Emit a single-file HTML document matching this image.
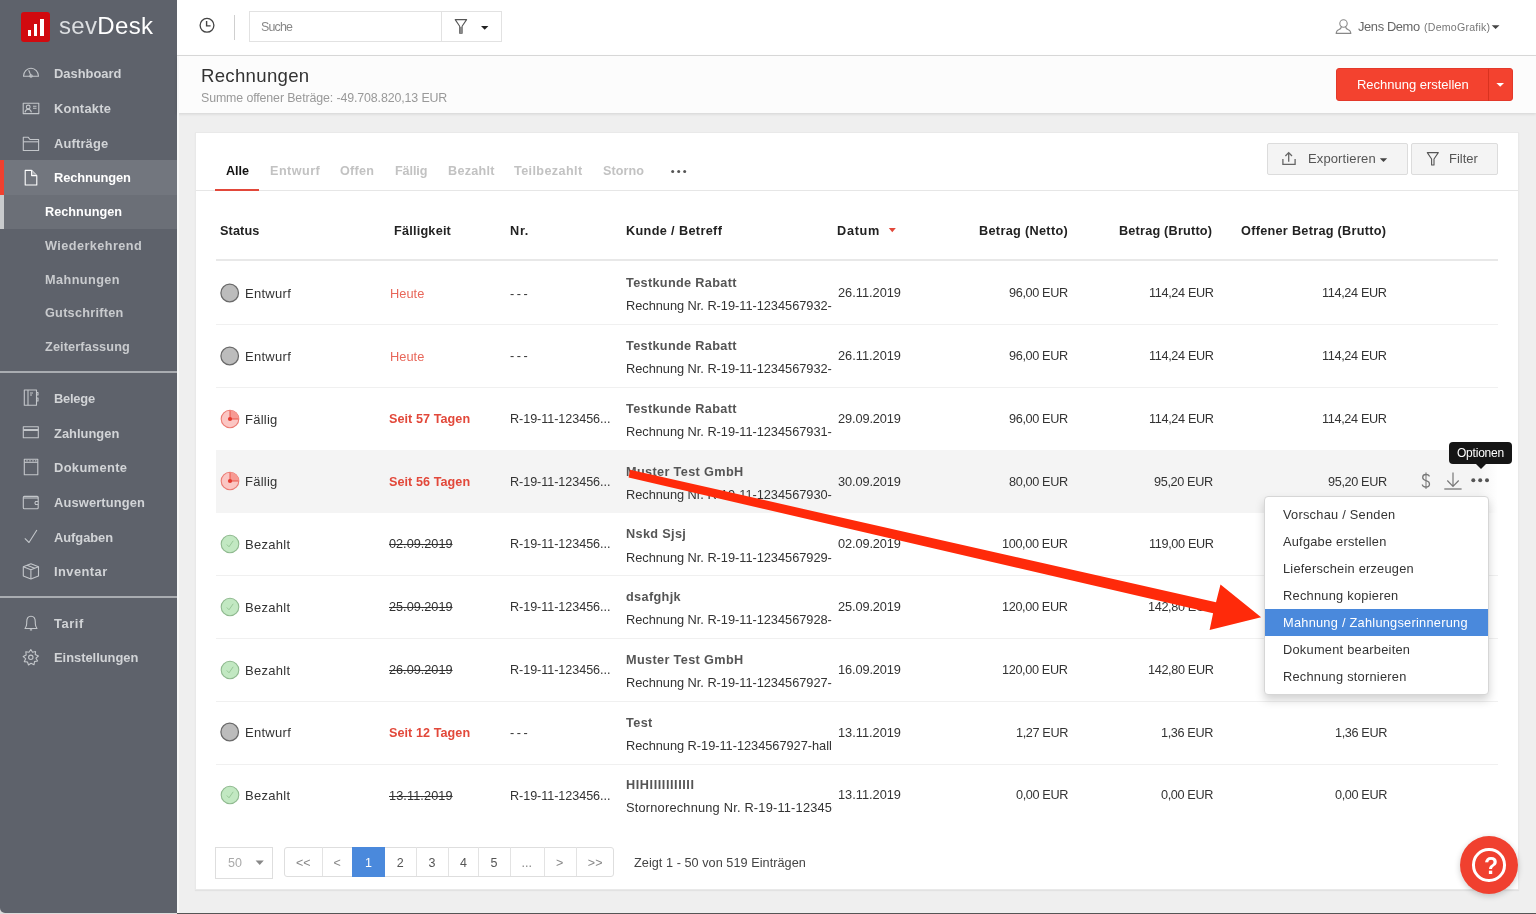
<!DOCTYPE html><html><head><meta charset="utf-8"><title>sevDesk</title><style>
html,body{margin:0;padding:0}
body{width:1536px;height:914px;overflow:hidden;position:relative;background:#efefef;font-family:"Liberation Sans",sans-serif}
.t{position:absolute;line-height:1;white-space:nowrap;will-change:transform}
</style></head><body>
<div style="position:absolute;left:0px;top:900px;width:177px;height:14px;background:#dcdcdc"></div>
<div style="position:absolute;left:0px;top:0px;width:177px;height:912.5px;background:#5e626b;border-bottom-left-radius:5px"></div>
<div style="position:absolute;left:21px;top:12px;width:29px;height:30px;background:#d10a0f;border-radius:3px"></div>
<div style="position:absolute;left:27.5px;top:30px;width:3.2px;height:5.7px;background:#fff"></div>
<div style="position:absolute;left:34px;top:24px;width:3.3px;height:11.7px;background:#fff"></div>
<div style="position:absolute;left:40.4px;top:18.7px;width:3.6px;height:17px;background:#fff"></div>
<div class="t" style="left:59px;top:14px;font-size:24px;line-height:1;color:#f2f2f2;letter-spacing:0.33px"><span style="color:#dcdee1">sev</span><span style="color:#fff">Desk</span></div>
<div style="position:absolute;left:0px;top:160px;width:177px;height:35px;background:#72767e"></div>
<div style="position:absolute;left:0px;top:160px;width:4px;height:35px;background:#f0402f"></div>
<div style="position:absolute;left:0px;top:195px;width:177px;height:34px;background:#6b6f77"></div>
<div style="position:absolute;left:0px;top:195px;width:4px;height:34px;background:#c9cbcd"></div>
<div class="t" style="left:53.50px;top:68px;font-size:12.9px;color:#d2d4d7;font-weight:bold;letter-spacing:0.003px;">Dashboard</div>
<div class="t" style="left:53.50px;top:103px;font-size:12.9px;color:#d2d4d7;font-weight:bold;letter-spacing:0.259px;">Kontakte</div>
<div class="t" style="left:53.50px;top:138px;font-size:12.9px;color:#d2d4d7;font-weight:bold;letter-spacing:0.167px;">Aufträge</div>
<div class="t" style="left:53.50px;top:172px;font-size:12.9px;color:#fff;font-weight:bold;letter-spacing:-0.136px;">Rechnungen</div>
<div class="t" style="left:44.80px;top:206px;font-size:12.7px;color:#fff;font-weight:bold;letter-spacing:0.021px;">Rechnungen</div>
<div class="t" style="left:44.80px;top:240px;font-size:12.7px;color:#c9cbce;font-weight:bold;letter-spacing:0.431px;">Wiederkehrend</div>
<div class="t" style="left:44.80px;top:274px;font-size:12.7px;color:#c9cbce;font-weight:bold;letter-spacing:0.419px;">Mahnungen</div>
<div class="t" style="left:44.80px;top:307px;font-size:12.7px;color:#c9cbce;font-weight:bold;letter-spacing:0.254px;">Gutschriften</div>
<div class="t" style="left:44.80px;top:341px;font-size:12.7px;color:#c9cbce;font-weight:bold;letter-spacing:0.136px;">Zeiterfassung</div>
<div style="position:absolute;left:0px;top:371px;width:177px;height:2px;background:#a9acb1"></div>
<div class="t" style="left:53.50px;top:393px;font-size:12.9px;color:#d2d4d7;font-weight:bold;letter-spacing:-0.240px;">Belege</div>
<div class="t" style="left:53.50px;top:428px;font-size:12.9px;color:#d2d4d7;font-weight:bold;letter-spacing:0.011px;">Zahlungen</div>
<div class="t" style="left:53.50px;top:462px;font-size:12.9px;color:#d2d4d7;font-weight:bold;letter-spacing:0.345px;">Dokumente</div>
<div class="t" style="left:53.50px;top:497px;font-size:12.9px;color:#d2d4d7;font-weight:bold;letter-spacing:0.128px;">Auswertungen</div>
<div class="t" style="left:53.50px;top:532px;font-size:12.9px;color:#d2d4d7;font-weight:bold;letter-spacing:-0.055px;">Aufgaben</div>
<div class="t" style="left:53.50px;top:566px;font-size:12.9px;color:#d2d4d7;font-weight:bold;letter-spacing:0.431px;">Inventar</div>
<div style="position:absolute;left:0px;top:596px;width:177px;height:2px;background:#a9acb1"></div>
<div class="t" style="left:53.50px;top:618px;font-size:12.9px;color:#d2d4d7;font-weight:bold;letter-spacing:0.569px;">Tarif</div>
<div class="t" style="left:53.50px;top:652px;font-size:12.9px;color:#d2d4d7;font-weight:bold;letter-spacing:-0.014px;">Einstellungen</div>
<svg style="position:absolute;left:0;top:0" width="177" height="914" fill="none" stroke="#c3c6ca" stroke-width="1.1" stroke-linejoin="round"><path d="M23.5 76.3 A7.5 8 0 0 1 38.5 76.3 Z"/><path d="M28.7 70.3 L30.9 75.6"/><circle cx="31" cy="76" r="1.2"/><rect x="23.2" y="103.2" width="15.6" height="10.4"/><circle cx="28.2" cy="107" r="1.9"/><path d="M25 112.4 Q25.5 109.5 28.2 109.3 Q30.9 109.5 31.4 112.4"/><path d="M33 106.3 H36.5 M33 108.3 H36.5"/><path d="M23.3 150.5 V137.3 H28.3 L30 139.5 H38.6 V150.5 Z"/><path d="M23.3 141.8 H38.6"/><path d="M25.2 170.4 H31.6 L36.8 175.6 V185 H25.2 Z" stroke="#fff"/><path d="M31.6 170.4 V175.6 H36.8" stroke="#fff" fill="#a0a3a8"/><rect x="24.3" y="390" width="12.2" height="15.3"/><path d="M28 390 V405.3"/><path d="M36.5 392.5 H38 V395 H36.5 M36.5 398 H38 V401 H36.5"/><path d="M30 393 H33 M30 395 H32"/><rect x="23.3" y="426.7" width="15" height="11.1"/><path d="M23.3 430 H38.3" stroke-width="2"/><rect x="24.3" y="459.2" width="13.5" height="15.5"/><path d="M24.3 462.3 H37.8"/><path d="M26.5 460.8 h1 M29.5 460.8 h1 M32.5 460.8 h1 M35.3 460.8 h1" stroke-width="1.4"/><rect x="23.3" y="496.4" width="14.9" height="12.3" rx="1"/><path d="M23.3 498 H38.2"/><path d="M38.2 501.5 H35.5 Q34.3 503 35.5 504.5 H38.2"/><path d="M24.8 538.3 L29 542.5 L36.9 530"/><path d="M30.9 563.8 L38.5 566.8 V576 L30.9 579 L23.3 576 V566.8 Z"/><path d="M23.3 566.8 L30.9 569.8 L38.5 566.8 M30.9 569.8 V579"/><path d="M27 565.3 L34.7 568.3"/><path d="M25 628.5 H37 Q35.3 626.5 35.3 623.5 V622 Q35.3 616.3 31 616.3 Q26.7 616.3 26.7 622 V623.5 Q26.7 626.5 25 628.5 Z"/><path d="M30 629.5 Q31 630.5 32 629.5"/><path d="M30.8 649.5 L32.5 652.2 L35.6 651.5 L35.2 654.6 L38.4 656 L36 658.2 L37.6 661 L34.5 661.6 L34 664.8 L31 663.3 L28.5 665 L27.5 662 L24.3 661.6 L25.7 658.7 L23.2 656.6 L26.2 655 L25.8 651.8 L29 652.3 Z"/><circle cx="30.8" cy="657.3" r="2.2"/></svg>
<div style="position:absolute;left:177px;top:0px;width:1359px;height:55px;background:#fff;border-bottom:1px solid #dcdcdc"></div>
<div style="position:absolute;left:177px;top:56px;width:1359px;height:57px;background:#fcfcfc;box-shadow:0 1px 3px rgba(0,0,0,.12)"></div>
<div class="t" style="left:200.60px;top:67px;font-size:18.6px;color:#333;font-weight:normal;letter-spacing:0.302px;">Rechnungen</div>
<div class="t" style="left:200.50px;top:92px;font-size:12.4px;color:#999;font-weight:normal;letter-spacing:-0.122px;">Summe offener Beträge: -49.708.820,13 EUR</div>
<div style="position:absolute;left:249px;top:11px;width:253px;height:31px;background:#fff;border:1px solid #e2e2e2;box-sizing:border-box"></div>
<div style="position:absolute;left:441px;top:11px;width:1px;height:31px;background:#e2e2e2"></div>
<div class="t" style="left:261.00px;top:21px;font-size:12.4px;color:#888;font-weight:normal;letter-spacing:-0.789px;">Suche</div>
<div style="position:absolute;left:234px;top:14.6px;width:1px;height:25px;background:#cfcfcf"></div>
<div style="position:absolute;left:1336px;top:68px;width:177px;height:33px;background:#f3422f;border:1px solid #e3392a;box-sizing:border-box;border-radius:3px"></div>
<div style="position:absolute;left:1488px;top:68.5px;width:1px;height:32.5px;background:#d8321f"></div>
<div class="t" style="left:1356.60px;top:78px;font-size:13px;color:#fff;font-weight:normal;letter-spacing:-0.019px;">Rechnung erstellen</div>
<div class="t" style="left:1357.50px;top:21px;font-size:12.9px;color:#666;font-weight:normal;letter-spacing:-0.381px;">Jens Demo</div>
<div class="t" style="left:1423.80px;top:22px;font-size:10.6px;color:#777;font-weight:normal;letter-spacing:0.235px;">(DemoGrafik)</div>
<div style="position:absolute;left:177px;top:56px;width:1.5px;height:857px;background:#f6f7f7"></div>
<div style="position:absolute;left:195px;top:132px;width:1324px;height:758px;background:#fff;border:1px solid #e9e9e9;box-sizing:border-box;box-shadow:0 1px 1px rgba(0,0,0,.05)"></div>
<div class="t" style="left:225.60px;top:165px;font-size:12.6px;color:#111;font-weight:bold;letter-spacing:-0.069px;">Alle</div>
<div class="t" style="left:269.50px;top:165px;font-size:12.6px;color:#c2c2c2;font-weight:bold;letter-spacing:0.480px;">Entwurf</div>
<div class="t" style="left:339.70px;top:165px;font-size:12.6px;color:#c2c2c2;font-weight:bold;letter-spacing:0.275px;">Offen</div>
<div class="t" style="left:395.00px;top:165px;font-size:12.6px;color:#c2c2c2;font-weight:bold;letter-spacing:-0.080px;">Fällig</div>
<div class="t" style="left:447.70px;top:165px;font-size:12.6px;color:#c2c2c2;font-weight:bold;letter-spacing:0.282px;">Bezahlt</div>
<div class="t" style="left:514.40px;top:165px;font-size:12.6px;color:#c2c2c2;font-weight:bold;letter-spacing:0.393px;">Teilbezahlt</div>
<div class="t" style="left:603.00px;top:165px;font-size:12.6px;color:#c2c2c2;font-weight:bold;letter-spacing:0.081px;">Storno</div>
<div style="position:absolute;left:196px;top:190px;width:1322px;height:1px;background:#e6e6e6"></div>
<div style="position:absolute;left:215px;top:188.8px;width:44px;height:2.4px;background:#e2483a"></div>
<div style="position:absolute;left:1267px;top:143px;width:140.5px;height:32.3px;background:#f4f4f4;border:1px solid #dcdcdc;box-sizing:border-box;border-radius:2px"></div>
<div style="position:absolute;left:1411px;top:143px;width:87px;height:32.3px;background:#f4f4f4;border:1px solid #dcdcdc;box-sizing:border-box;border-radius:2px"></div>
<div class="t" style="left:1308.30px;top:152px;font-size:13px;color:#555;font-weight:normal;letter-spacing:0.122px;">Exportieren</div>
<div class="t" style="left:1449.00px;top:152px;font-size:13px;color:#555;font-weight:normal;letter-spacing:-0.017px;">Filter</div>
<div class="t" style="left:220.40px;top:225px;font-size:12.7px;color:#222;font-weight:bold;letter-spacing:0.118px;">Status</div>
<div class="t" style="left:394.30px;top:225px;font-size:12.7px;color:#222;font-weight:bold;letter-spacing:0.206px;">Fälligkeit</div>
<div class="t" style="left:510.30px;top:225px;font-size:12.7px;color:#222;font-weight:bold;letter-spacing:0.729px;">Nr.</div>
<div class="t" style="left:625.70px;top:225px;font-size:12.7px;color:#222;font-weight:bold;letter-spacing:0.354px;">Kunde / Betreff</div>
<div class="t" style="left:837.30px;top:225px;font-size:12.7px;color:#222;font-weight:bold;letter-spacing:0.723px;">Datum</div>
<div class="t" style="right:468.29px;top:225px;font-size:12.7px;color:#222;font-weight:bold;letter-spacing:0.318px;">Betrag (Netto)</div>
<div class="t" style="right:323.69px;top:225px;font-size:12.7px;color:#222;font-weight:bold;letter-spacing:0.200px;">Betrag (Brutto)</div>
<div class="t" style="right:149.71px;top:225px;font-size:12.7px;color:#222;font-weight:bold;letter-spacing:0.282px;">Offener Betrag (Brutto)</div>
<div style="position:absolute;left:216px;top:259px;width:1282px;height:2px;background:#e8e8e8"></div>
<svg style="position:absolute;left:219.5px;top:283.0px" width="20" height="20" viewBox="0 0 20 20"><circle cx="9.7" cy="10" r="8.8" fill="#bcbcbc" stroke="#6a6a6a" stroke-width="1.25"/></svg>
<div class="t" style="left:244.70px;top:287px;font-size:13px;color:#333;font-weight:normal;letter-spacing:0.283px;">Entwurf</div>
<div class="t" style="left:389.70px;top:288px;font-size:12.8px;color:#e8675a;font-weight:normal;letter-spacing:0.037px;">Heute</div>
<div class="t" style="left:510.10px;top:288px;font-size:12.6px;color:#333;font-weight:normal;letter-spacing:-0.473px;">- - -</div>
<div class="t" style="left:625.80px;top:277px;font-size:12.7px;color:#555;font-weight:bold;letter-spacing:0.333px;">Testkunde Rabatt</div>
<div style="position:absolute;left:625.8px;top:298px;width:207px;height:18px;overflow:hidden"><div class="t" style="left:0.00px;top:2px;font-size:12.8px;color:#333;font-weight:normal;letter-spacing:-0.031px;">Rechnung Nr. R-19-11-1234567932-</div></div>
<div class="t" style="left:837.70px;top:287px;font-size:12.8px;color:#333;font-weight:normal;letter-spacing:-0.013px;">26.11.2019</div>
<div class="t" style="right:468.17px;top:287px;font-size:12.7px;color:#333;font-weight:normal;letter-spacing:-0.367px;">96,00 EUR</div>
<div class="t" style="right:322.86px;top:287px;font-size:12.7px;color:#333;font-weight:normal;letter-spacing:-0.358px;">114,24 EUR</div>
<div class="t" style="right:149.16px;top:287px;font-size:12.7px;color:#333;font-weight:normal;letter-spacing:-0.358px;">114,24 EUR</div>
<div style="position:absolute;left:216px;top:324px;width:1282px;height:1px;background:#f0f0f0"></div>
<svg style="position:absolute;left:219.5px;top:345.75px" width="20" height="20" viewBox="0 0 20 20"><circle cx="9.7" cy="10" r="8.8" fill="#bcbcbc" stroke="#6a6a6a" stroke-width="1.25"/></svg>
<div class="t" style="left:244.70px;top:350px;font-size:13px;color:#333;font-weight:normal;letter-spacing:0.283px;">Entwurf</div>
<div class="t" style="left:389.70px;top:351px;font-size:12.8px;color:#e8675a;font-weight:normal;letter-spacing:0.037px;">Heute</div>
<div class="t" style="left:510.10px;top:350px;font-size:12.6px;color:#333;font-weight:normal;letter-spacing:-0.473px;">- - -</div>
<div class="t" style="left:625.80px;top:340px;font-size:12.7px;color:#555;font-weight:bold;letter-spacing:0.333px;">Testkunde Rabatt</div>
<div style="position:absolute;left:625.8px;top:361px;width:207px;height:18px;overflow:hidden"><div class="t" style="left:0.00px;top:2px;font-size:12.8px;color:#333;font-weight:normal;letter-spacing:-0.031px;">Rechnung Nr. R-19-11-1234567932-</div></div>
<div class="t" style="left:837.70px;top:350px;font-size:12.8px;color:#333;font-weight:normal;letter-spacing:-0.013px;">26.11.2019</div>
<div class="t" style="right:468.17px;top:350px;font-size:12.7px;color:#333;font-weight:normal;letter-spacing:-0.367px;">96,00 EUR</div>
<div class="t" style="right:322.86px;top:350px;font-size:12.7px;color:#333;font-weight:normal;letter-spacing:-0.358px;">114,24 EUR</div>
<div class="t" style="right:149.16px;top:350px;font-size:12.7px;color:#333;font-weight:normal;letter-spacing:-0.358px;">114,24 EUR</div>
<div style="position:absolute;left:216px;top:387px;width:1282px;height:1px;background:#f0f0f0"></div>
<svg style="position:absolute;left:219.5px;top:408.5px" width="20" height="20" viewBox="0 0 20 20"><circle cx="10" cy="10" r="8.8" fill="#fbc6c3" stroke="#ec7b73" stroke-width="1.1"/><path d="M10 10 V1.2 A8.8 8.8 0 0 1 18.8 10 Z" fill="#f79a93"/><path d="M10 1.5 V10 H18.5" fill="none" stroke="#e9564b" stroke-width="1"/><circle cx="10" cy="10" r="2.1" fill="#e53a2f"/></svg>
<div class="t" style="left:244.70px;top:413px;font-size:13px;color:#333;font-weight:normal;letter-spacing:0.239px;">Fällig</div>
<div class="t" style="left:389.40px;top:413px;font-size:12.6px;color:#e2483a;font-weight:bold;letter-spacing:0.069px;">Seit 57 Tagen</div>
<div class="t" style="left:510.10px;top:413px;font-size:12.6px;color:#333;font-weight:normal;letter-spacing:-0.052px;">R-19-11-123456...</div>
<div class="t" style="left:625.80px;top:403px;font-size:12.7px;color:#555;font-weight:bold;letter-spacing:0.333px;">Testkunde Rabatt</div>
<div style="position:absolute;left:625.8px;top:424px;width:207px;height:18px;overflow:hidden"><div class="t" style="left:0.00px;top:2px;font-size:12.8px;color:#333;font-weight:normal;letter-spacing:-0.031px;">Rechnung Nr. R-19-11-1234567931-</div></div>
<div class="t" style="left:837.70px;top:413px;font-size:12.8px;color:#333;font-weight:normal;letter-spacing:-0.118px;">29.09.2019</div>
<div class="t" style="right:468.17px;top:413px;font-size:12.7px;color:#333;font-weight:normal;letter-spacing:-0.367px;">96,00 EUR</div>
<div class="t" style="right:322.86px;top:413px;font-size:12.7px;color:#333;font-weight:normal;letter-spacing:-0.358px;">114,24 EUR</div>
<div class="t" style="right:149.16px;top:413px;font-size:12.7px;color:#333;font-weight:normal;letter-spacing:-0.358px;">114,24 EUR</div>
<div style="position:absolute;left:216px;top:449.75px;width:1282px;height:62.75px;background:linear-gradient(to right,#f4f4f4 0,#f4f4f4 1262px,rgba(244,244,244,0) 1282px)"></div>
<svg style="position:absolute;left:219.5px;top:471.25px" width="20" height="20" viewBox="0 0 20 20"><circle cx="10" cy="10" r="8.8" fill="#fbc6c3" stroke="#ec7b73" stroke-width="1.1"/><path d="M10 10 V1.2 A8.8 8.8 0 0 1 18.8 10 Z" fill="#f79a93"/><path d="M10 1.5 V10 H18.5" fill="none" stroke="#e9564b" stroke-width="1"/><circle cx="10" cy="10" r="2.1" fill="#e53a2f"/></svg>
<div class="t" style="left:244.70px;top:475px;font-size:13px;color:#333;font-weight:normal;letter-spacing:0.239px;">Fällig</div>
<div class="t" style="left:389.40px;top:476px;font-size:12.6px;color:#e2483a;font-weight:bold;letter-spacing:0.069px;">Seit 56 Tagen</div>
<div class="t" style="left:510.10px;top:476px;font-size:12.6px;color:#333;font-weight:normal;letter-spacing:-0.052px;">R-19-11-123456...</div>
<div class="t" style="left:625.80px;top:466px;font-size:12.7px;color:#555;font-weight:bold;letter-spacing:0.353px;">Muster Test GmbH</div>
<div style="position:absolute;left:625.8px;top:487px;width:207px;height:18px;overflow:hidden"><div class="t" style="left:0.00px;top:2px;font-size:12.8px;color:#333;font-weight:normal;letter-spacing:-0.031px;">Rechnung Nr. R-19-11-1234567930-</div></div>
<div class="t" style="left:837.70px;top:476px;font-size:12.8px;color:#333;font-weight:normal;letter-spacing:-0.118px;">30.09.2019</div>
<div class="t" style="right:468.17px;top:476px;font-size:12.7px;color:#333;font-weight:normal;letter-spacing:-0.367px;">80,00 EUR</div>
<div class="t" style="right:322.87px;top:476px;font-size:12.7px;color:#333;font-weight:normal;letter-spacing:-0.367px;">95,20 EUR</div>
<div class="t" style="right:149.17px;top:476px;font-size:12.7px;color:#333;font-weight:normal;letter-spacing:-0.367px;">95,20 EUR</div>
<svg style="position:absolute;left:219.5px;top:534.0px" width="20" height="20" viewBox="0 0 20 20"><circle cx="10" cy="10" r="8.8" fill="#c2e8c2" stroke="#8fb98f" stroke-width="1.1"/><path d="M6.8 10.5 L9 12.8 L13.2 6.8" fill="none" stroke="#98c898" stroke-width="1"/></svg>
<div class="t" style="left:244.70px;top:538px;font-size:13px;color:#333;font-weight:normal;letter-spacing:0.278px;">Bezahlt</div>
<div class="t" style="left:389.40px;top:538px;font-size:12.7px;color:#333;font-weight:normal;letter-spacing:0.004px;text-decoration:line-through">02.09.2019</div>
<div class="t" style="left:510.10px;top:538px;font-size:12.6px;color:#333;font-weight:normal;letter-spacing:-0.052px;">R-19-11-123456...</div>
<div class="t" style="left:625.80px;top:528px;font-size:12.7px;color:#555;font-weight:bold;letter-spacing:0.338px;">Nskd Sjsj</div>
<div style="position:absolute;left:625.8px;top:550px;width:207px;height:18px;overflow:hidden"><div class="t" style="left:0.00px;top:2px;font-size:12.8px;color:#333;font-weight:normal;letter-spacing:-0.031px;">Rechnung Nr. R-19-11-1234567929-</div></div>
<div class="t" style="left:837.70px;top:538px;font-size:12.8px;color:#333;font-weight:normal;letter-spacing:-0.118px;">02.09.2019</div>
<div class="t" style="right:468.17px;top:538px;font-size:12.7px;color:#333;font-weight:normal;letter-spacing:-0.363px;">100,00 EUR</div>
<div class="t" style="right:322.86px;top:538px;font-size:12.7px;color:#333;font-weight:normal;letter-spacing:-0.358px;">119,00 EUR</div>
<div style="position:absolute;left:216px;top:575px;width:1282px;height:1px;background:#f0f0f0"></div>
<svg style="position:absolute;left:219.5px;top:596.75px" width="20" height="20" viewBox="0 0 20 20"><circle cx="10" cy="10" r="8.8" fill="#c2e8c2" stroke="#8fb98f" stroke-width="1.1"/><path d="M6.8 10.5 L9 12.8 L13.2 6.8" fill="none" stroke="#98c898" stroke-width="1"/></svg>
<div class="t" style="left:244.70px;top:601px;font-size:13px;color:#333;font-weight:normal;letter-spacing:0.278px;">Bezahlt</div>
<div class="t" style="left:389.40px;top:601px;font-size:12.7px;color:#333;font-weight:normal;letter-spacing:0.004px;text-decoration:line-through">25.09.2019</div>
<div class="t" style="left:510.10px;top:601px;font-size:12.6px;color:#333;font-weight:normal;letter-spacing:-0.052px;">R-19-11-123456...</div>
<div class="t" style="left:625.80px;top:591px;font-size:12.7px;color:#555;font-weight:bold;letter-spacing:0.353px;">dsafghjk</div>
<div style="position:absolute;left:625.8px;top:612px;width:207px;height:18px;overflow:hidden"><div class="t" style="left:0.00px;top:2px;font-size:12.8px;color:#333;font-weight:normal;letter-spacing:-0.031px;">Rechnung Nr. R-19-11-1234567928-</div></div>
<div class="t" style="left:837.70px;top:601px;font-size:12.8px;color:#333;font-weight:normal;letter-spacing:-0.118px;">25.09.2019</div>
<div class="t" style="right:468.17px;top:601px;font-size:12.7px;color:#333;font-weight:normal;letter-spacing:-0.363px;">120,00 EUR</div>
<div class="t" style="right:322.87px;top:601px;font-size:12.7px;color:#333;font-weight:normal;letter-spacing:-0.363px;">142,80 EUR</div>
<div style="position:absolute;left:216px;top:638px;width:1282px;height:1px;background:#f0f0f0"></div>
<svg style="position:absolute;left:219.5px;top:659.5px" width="20" height="20" viewBox="0 0 20 20"><circle cx="10" cy="10" r="8.8" fill="#c2e8c2" stroke="#8fb98f" stroke-width="1.1"/><path d="M6.8 10.5 L9 12.8 L13.2 6.8" fill="none" stroke="#98c898" stroke-width="1"/></svg>
<div class="t" style="left:244.70px;top:664px;font-size:13px;color:#333;font-weight:normal;letter-spacing:0.278px;">Bezahlt</div>
<div class="t" style="left:389.40px;top:664px;font-size:12.7px;color:#333;font-weight:normal;letter-spacing:0.004px;text-decoration:line-through">26.09.2019</div>
<div class="t" style="left:510.10px;top:664px;font-size:12.6px;color:#333;font-weight:normal;letter-spacing:-0.052px;">R-19-11-123456...</div>
<div class="t" style="left:625.80px;top:654px;font-size:12.7px;color:#555;font-weight:bold;letter-spacing:0.353px;">Muster Test GmbH</div>
<div style="position:absolute;left:625.8px;top:675px;width:207px;height:18px;overflow:hidden"><div class="t" style="left:0.00px;top:2px;font-size:12.8px;color:#333;font-weight:normal;letter-spacing:-0.031px;">Rechnung Nr. R-19-11-1234567927-</div></div>
<div class="t" style="left:837.70px;top:664px;font-size:12.8px;color:#333;font-weight:normal;letter-spacing:-0.118px;">16.09.2019</div>
<div class="t" style="right:468.17px;top:664px;font-size:12.7px;color:#333;font-weight:normal;letter-spacing:-0.363px;">120,00 EUR</div>
<div class="t" style="right:322.87px;top:664px;font-size:12.7px;color:#333;font-weight:normal;letter-spacing:-0.363px;">142,80 EUR</div>
<div style="position:absolute;left:216px;top:701px;width:1282px;height:1px;background:#f0f0f0"></div>
<svg style="position:absolute;left:219.5px;top:722.25px" width="20" height="20" viewBox="0 0 20 20"><circle cx="9.7" cy="10" r="8.8" fill="#bcbcbc" stroke="#6a6a6a" stroke-width="1.25"/></svg>
<div class="t" style="left:244.70px;top:726px;font-size:13px;color:#333;font-weight:normal;letter-spacing:0.283px;">Entwurf</div>
<div class="t" style="left:389.40px;top:727px;font-size:12.6px;color:#e2483a;font-weight:bold;letter-spacing:0.069px;">Seit 12 Tagen</div>
<div class="t" style="left:510.10px;top:727px;font-size:12.6px;color:#333;font-weight:normal;letter-spacing:-0.473px;">- - -</div>
<div class="t" style="left:625.80px;top:717px;font-size:12.7px;color:#555;font-weight:bold;letter-spacing:0.396px;">Test</div>
<div style="position:absolute;left:625.8px;top:738px;width:207px;height:18px;overflow:hidden"><div class="t" style="left:0.00px;top:2px;font-size:12.8px;color:#333;font-weight:normal;letter-spacing:-0.031px;">Rechnung R-19-11-1234567927-hall</div></div>
<div class="t" style="left:837.70px;top:727px;font-size:12.8px;color:#333;font-weight:normal;letter-spacing:-0.013px;">13.11.2019</div>
<div class="t" style="right:468.17px;top:727px;font-size:12.7px;color:#333;font-weight:normal;letter-spacing:-0.372px;">1,27 EUR</div>
<div class="t" style="right:322.87px;top:727px;font-size:12.7px;color:#333;font-weight:normal;letter-spacing:-0.372px;">1,36 EUR</div>
<div class="t" style="right:149.17px;top:727px;font-size:12.7px;color:#333;font-weight:normal;letter-spacing:-0.372px;">1,36 EUR</div>
<div style="position:absolute;left:216px;top:764px;width:1282px;height:1px;background:#f0f0f0"></div>
<svg style="position:absolute;left:219.5px;top:785.0px" width="20" height="20" viewBox="0 0 20 20"><circle cx="10" cy="10" r="8.8" fill="#c2e8c2" stroke="#8fb98f" stroke-width="1.1"/><path d="M6.8 10.5 L9 12.8 L13.2 6.8" fill="none" stroke="#98c898" stroke-width="1"/></svg>
<div class="t" style="left:244.70px;top:789px;font-size:13px;color:#333;font-weight:normal;letter-spacing:0.278px;">Bezahlt</div>
<div class="t" style="left:389.40px;top:790px;font-size:12.7px;color:#333;font-weight:normal;letter-spacing:0.108px;text-decoration:line-through">13.11.2019</div>
<div class="t" style="left:510.10px;top:790px;font-size:12.6px;color:#333;font-weight:normal;letter-spacing:-0.052px;">R-19-11-123456...</div>
<div class="t" style="left:625.80px;top:779px;font-size:12.7px;color:#555;font-weight:bold;letter-spacing:0.563px;">HIHIIIIIIIIIII</div>
<div style="position:absolute;left:625.8px;top:800px;width:207px;height:18px;overflow:hidden"><div class="t" style="left:0.00px;top:2px;font-size:12.8px;color:#333;font-weight:normal;letter-spacing:0.204px;">Stornorechnung Nr. R-19-11-123456789</div></div>
<div class="t" style="left:837.70px;top:789px;font-size:12.8px;color:#333;font-weight:normal;letter-spacing:-0.013px;">13.11.2019</div>
<div class="t" style="right:468.17px;top:789px;font-size:12.7px;color:#333;font-weight:normal;letter-spacing:-0.372px;">0,00 EUR</div>
<div class="t" style="right:322.87px;top:789px;font-size:12.7px;color:#333;font-weight:normal;letter-spacing:-0.372px;">0,00 EUR</div>
<div class="t" style="right:149.17px;top:789px;font-size:12.7px;color:#333;font-weight:normal;letter-spacing:-0.372px;">0,00 EUR</div>
<div style="position:absolute;left:215.4px;top:846.5px;width:57.4px;height:32.3px;border:1px solid #dedede;box-sizing:border-box"></div>
<div class="t" style="left:228.20px;top:857px;font-size:12.5px;color:#aaa;font-weight:normal;">50</div>
<div style="position:absolute;left:283.5px;top:846.5px;width:330.3px;height:30.3px;border:1px solid #dedede;box-sizing:border-box;border-radius:3px"></div>
<div class="t" style="left:283.5px;width:38.5px;text-align:center;top:857px;font-size:12.5px;color:#888">&lt;&lt;</div>
<div style="position:absolute;left:322px;top:847px;width:1px;height:29.3px;background:#e3e3e3"></div>
<div class="t" style="left:322px;width:30.100000000000023px;text-align:center;top:857px;font-size:12.5px;color:#888">&lt;</div>
<div style="position:absolute;left:352.1px;top:846.5px;width:32.89999999999998px;height:30.3px;background:#4a89dc"></div>
<div class="t" style="left:352.1px;width:32.89999999999998px;text-align:center;top:857px;font-size:12.5px;color:#fff">1</div>
<div class="t" style="left:385px;width:30.600000000000023px;text-align:center;top:857px;font-size:12.5px;color:#555">2</div>
<div style="position:absolute;left:415.6px;top:847px;width:1px;height:29.3px;background:#e3e3e3"></div>
<div class="t" style="left:415.6px;width:31.899999999999977px;text-align:center;top:857px;font-size:12.5px;color:#555">3</div>
<div style="position:absolute;left:447.5px;top:847px;width:1px;height:29.3px;background:#e3e3e3"></div>
<div class="t" style="left:447.5px;width:30.899999999999977px;text-align:center;top:857px;font-size:12.5px;color:#555">4</div>
<div style="position:absolute;left:478.4px;top:847px;width:1px;height:29.3px;background:#e3e3e3"></div>
<div class="t" style="left:478.4px;width:32.0px;text-align:center;top:857px;font-size:12.5px;color:#555">5</div>
<div style="position:absolute;left:510.4px;top:847px;width:1px;height:29.3px;background:#e3e3e3"></div>
<div class="t" style="left:510.4px;width:33.60000000000002px;text-align:center;top:857px;font-size:12.5px;color:#888">...</div>
<div style="position:absolute;left:544px;top:847px;width:1px;height:29.3px;background:#e3e3e3"></div>
<div class="t" style="left:544px;width:31.5px;text-align:center;top:857px;font-size:12.5px;color:#888">&gt;</div>
<div style="position:absolute;left:575.5px;top:847px;width:1px;height:29.3px;background:#e3e3e3"></div>
<div class="t" style="left:575.5px;width:38.299999999999955px;text-align:center;top:857px;font-size:12.5px;color:#888">&gt;&gt;</div>
<div class="t" style="left:634.00px;top:857px;font-size:12.7px;color:#444;font-weight:normal;letter-spacing:0.040px;">Zeigt 1 - 50 von 519 Einträgen</div>
<svg style="position:absolute;left:0;top:0" width="1536" height="914" fill="none" stroke-linecap="butt"><circle cx="207" cy="25.3" r="6.9" stroke="#444" stroke-width="1.3"/><path d="M206.6 21 V25.9 H210.6" stroke="#444" stroke-width="1.4"/><path d="M455.2 19.6 H466.6 L462.1 26.3 V33.2 H459.7 V26.3 Z" stroke="#555" stroke-width="1.1" stroke-linejoin="round"/><path d="M459.7 27 H462.1 V33.3 H459.7 Z" fill="#888" stroke="none"/><path d="M481 26 H488.4 L484.7 29.7 Z" fill="#222" stroke="none"/><circle cx="1343.5" cy="23.5" r="3.7" stroke="#888" stroke-width="1.1"/><path d="M1341.2 26.5 Q1341.5 28.5 1339 29.5 Q1336.3 30.5 1336.2 33.4 H1350.8 Q1350.7 30.5 1348 29.5 Q1345.5 28.5 1345.8 26.5" stroke="#888" stroke-width="1.1"/><path d="M1491.7 25.2 H1499.5 L1495.6 28.9 Z" fill="#444" stroke="none"/><path d="M1496.4 83 H1504 L1500.2 86.8 Z" fill="#fff" stroke="none"/><circle cx="672.7" cy="171.5" r="1.5" fill="#555" stroke="none"/><circle cx="678.7" cy="171.5" r="1.5" fill="#555" stroke="none"/><circle cx="684.7" cy="171.5" r="1.5" fill="#555" stroke="none"/><path d="M1282.9 159.1 V164.3 H1295.1 V159.1" stroke="#666" stroke-width="1.3"/><path d="M1288.7 152.8 V161.7 M1285.4 156 L1288.7 152.6 L1292 156" stroke="#666" stroke-width="1.3"/><path d="M1379.8 158.3 H1387.2 L1383.5 162 Z" fill="#444" stroke="none"/><path d="M1427.3 152.6 H1438.3 L1434 159 V165 H1431.6 V159 Z" stroke="#555" stroke-width="1.1" stroke-linejoin="round"/><path d="M888.8 228 H895.8 L892.3 232.3 Z" fill="#e2483a" stroke="none"/><path d="M1426 472.4 V489" stroke="#777" stroke-width="1"/><path d="M1429.3 476.5 Q1429 474.5 1426 474.5 Q1422.7 474.5 1422.7 477.3 Q1422.7 479.8 1426 480.6 Q1429.5 481.5 1429.5 484 Q1429.5 487 1426 487 Q1422.5 487 1422.3 484.5" stroke="#777" stroke-width="1.3"/><path d="M1453 472.4 V486 M1447.3 480.5 L1453 486.3 L1458.7 480.5" stroke="#777" stroke-width="1.2"/><path d="M1444.3 489 H1461.6" stroke="#777" stroke-width="1.3"/><circle cx="1473.3" cy="480.3" r="2" fill="#555" stroke="none"/><circle cx="1480.2" cy="480.3" r="2" fill="#555" stroke="none"/><circle cx="1487" cy="480.3" r="2" fill="#555" stroke="none"/><path d="M255.6 860.5 H263.8 L259.7 865 Z" fill="#888" stroke="none"/></svg>
<div style="position:absolute;left:1263.5px;top:495.5px;width:225px;height:199px;background:#fff;border:1px solid #d6d6d6;box-sizing:border-box;border-radius:4px;box-shadow:0 5px 10px rgba(0,0,0,.18)"></div>
<div class="t" style="left:1283.20px;top:509px;font-size:12.8px;color:#333;font-weight:normal;letter-spacing:0.254px;">Vorschau / Senden</div>
<div class="t" style="left:1283.20px;top:536px;font-size:12.8px;color:#333;font-weight:normal;letter-spacing:0.233px;">Aufgabe erstellen</div>
<div class="t" style="left:1283.20px;top:563px;font-size:12.8px;color:#333;font-weight:normal;letter-spacing:0.236px;">Lieferschein erzeugen</div>
<div class="t" style="left:1283.20px;top:590px;font-size:12.8px;color:#333;font-weight:normal;letter-spacing:0.260px;">Rechnung kopieren</div>
<div style="position:absolute;left:1264.5px;top:609.4px;width:223px;height:26.5px;background:#4a89dc"></div>
<div class="t" style="left:1283.20px;top:617px;font-size:12.8px;color:#fff;font-weight:normal;letter-spacing:0.247px;">Mahnung / Zahlungserinnerung</div>
<div class="t" style="left:1283.20px;top:644px;font-size:12.8px;color:#333;font-weight:normal;letter-spacing:0.255px;">Dokument bearbeiten</div>
<div class="t" style="left:1283.20px;top:671px;font-size:12.8px;color:#333;font-weight:normal;letter-spacing:0.248px;">Rechnung stornieren</div>
<div style="position:absolute;left:1449px;top:442px;width:63px;height:22px;background:#151515;border-radius:4px"></div>
<div style="position:absolute;left:1476px;top:464px;width:0;height:0;border-left:5px solid transparent;border-right:5px solid transparent;border-top:5px solid #151515"></div>
<div class="t" style="left:1457.00px;top:447px;font-size:12px;color:#fff;font-weight:normal;letter-spacing:-0.215px;">Optionen</div>
<div style="position:absolute;left:1460px;top:836px;width:58px;height:58px;border-radius:50%;background:#f0402f;box-shadow:0 2px 6px rgba(0,0,0,.2)"></div>
<div style="position:absolute;left:1472.4px;top:848.3px;width:33.4px;height:33.4px;border-radius:50%;border:3.6px solid #fff;box-sizing:border-box"></div>
<div class="t" style="left:1484.20px;top:855px;font-size:23px;color:#fff;font-weight:bold;">?</div>
<svg style="position:absolute;left:0;top:0" width="1536" height="914"><polygon fill="#ff2a0a" points="630,469.8 1216,602.2 1220.5,584.4 1261.1,617.2 1209.6,630.1 1213.1,613.3 628.6,477.6"/></svg>
<div style="position:absolute;left:177px;top:913px;width:1359px;height:1px;background:#555"></div>
</body></html>
